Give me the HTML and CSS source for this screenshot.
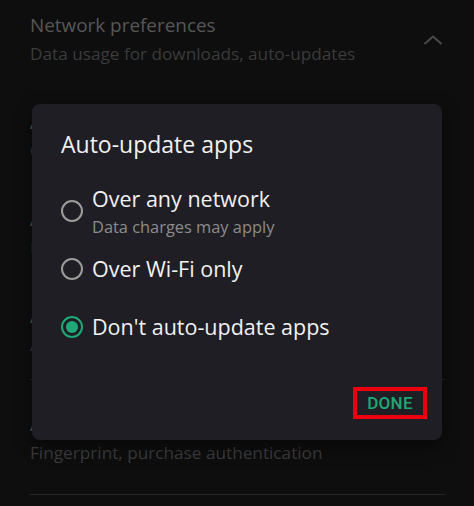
FILE: index.html
```html
<!DOCTYPE html>
<html lang="en">
<head>
<meta charset="utf-8">
<title>Settings</title>
<link rel="stylesheet" href="styles.css">
</head>
<body>
<main class="settings">
  <section class="group">
    <div class="row row-head">
      <div class="row-text">
        <div class="row-title">Network preferences</div>
        <div class="row-sub">Data usage for downloads, auto-updates</div>
      </div>
      <svg class="chevron" width="20" height="10" viewBox="0 0 20 10" aria-hidden="true">
        <polyline points="1.5,9 10,1.5 18.5,9" fill="none" stroke="currentColor" stroke-width="2"/>
      </svg>
    </div>
    <div class="row">
      <div class="row-title">App download preference</div>
      <div class="row-sub">Over any network</div>
    </div>
    <div class="row">
      <div class="row-title">Auto-update apps</div>
      <div class="row-sub">Don't auto-update apps</div>
    </div>
    <div class="row">
      <div class="row-title">Auto-play videos</div>
      <div class="row-sub">Auto-play videos over Wi-Fi only</div>
    </div>
  </section>
  <section class="group">
    <div class="row row-last">
      <div class="row-title">Authentication</div>
      <div class="row-sub">Fingerprint, purchase authentication</div>
    </div>
  </section>
</main>

<div class="dialog" role="dialog" aria-labelledby="dlg-title">
  <h2 class="dialog-title" id="dlg-title">Auto-update apps</h2>
  <div class="options">
    <label class="option">
      <span class="radio"></span>
      <span class="option-text">
        <span class="option-label">Over any network</span>
        <span class="option-sub">Data charges may apply</span>
      </span>
    </label>
    <label class="option">
      <span class="radio"></span>
      <span class="option-text">
        <span class="option-label">Over Wi-Fi only</span>
      </span>
    </label>
    <label class="option">
      <span class="radio radio-on"></span>
      <span class="option-text">
        <span class="option-label">Don't auto-update apps</span>
      </span>
    </label>
  </div>
  <div class="dialog-actions">
    <button class="btn-done" type="button">DONE</button>
  </div>
</div>
</body>
</html>
```

FILE: styles.css
```css
html, body {
  margin: 0;
  padding: 0;
}

body {
  background: #0e0e0e;
  font-family: "Open Sans", Roboto, sans-serif;
  width: 474px;
  height: 506px;
  overflow: hidden;
  position: relative;
}

/* settings list behind the dialog */
.settings {
  padding: 0 29px 0 30px;
}

.group {
  border-bottom: 1px solid #262626;
}

.row {
  padding: 22px 0;
}

.row-head {
  display: flex;
  align-items: center;
  justify-content: space-between;
  padding-top: 13px;
}

.row-last {
  padding: 32px 0 29px;
}

.row-title {
  font-size: 18.9px;
  line-height: 24px;
  color: #575757;
}

.row-sub {
  margin-top: 5px;
  font-size: 17.2px;
  line-height: 24px;
  color: #3b3b3b;
}

.chevron {
  color: #4a4a4a;
  margin-right: 2px;
}

/* dialog */
.dialog {
  position: absolute;
  left: 32px;
  top: 104px;
  width: 410px;
  height: 336px;
  box-sizing: border-box;
  padding: 24px 15px 21px 29px;
  background: #1f1e24;
  border-radius: 8px;
  box-shadow: 0 6px 18px rgba(0, 0, 0, 0.45);
  display: flex;
  flex-direction: column;
}

.dialog-title {
  margin: 0;
  font-size: 23px;
  line-height: 32px;
  font-weight: 500;
  color: #f1f1f1;
}

.options {
  margin-top: 22px;
  display: flex;
  flex-direction: column;
}

.option {
  height: 58px;
  display: flex;
  align-items: center;
  gap: 9px;
}

.radio {
  width: 22px;
  height: 22px;
  box-sizing: border-box;
  border: 2px solid #9c9c9c;
  border-radius: 50%;
  flex: none;
  display: flex;
  align-items: center;
  justify-content: center;
}

.radio-on {
  border-color: #1ea877;
}

.radio-on::after {
  content: "";
  width: 12px;
  height: 12px;
  border-radius: 50%;
  background: #1ea877;
}

.option-text {
  display: flex;
  flex-direction: column;
}

.option-label {
  font-size: 21.5px;
  line-height: 28px;
  color: #f1f1f1;
}

.option-sub {
  margin-top: 3px;
  font-size: 16.4px;
  line-height: 22px;
  color: #8c8c8c;
}

.dialog-actions {
  margin-top: auto;
  display: flex;
  justify-content: flex-end;
}

.btn-done {
  width: 74px;
  height: 32px;
  box-sizing: border-box;
  border: 4px solid #ec0010;
  background: transparent;
  color: #1ea877;
  font-family: Roboto, sans-serif;
  font-size: 17px;
  font-weight: 500;
  letter-spacing: 0.3px;
  padding: 0;
  cursor: pointer;
}
```
